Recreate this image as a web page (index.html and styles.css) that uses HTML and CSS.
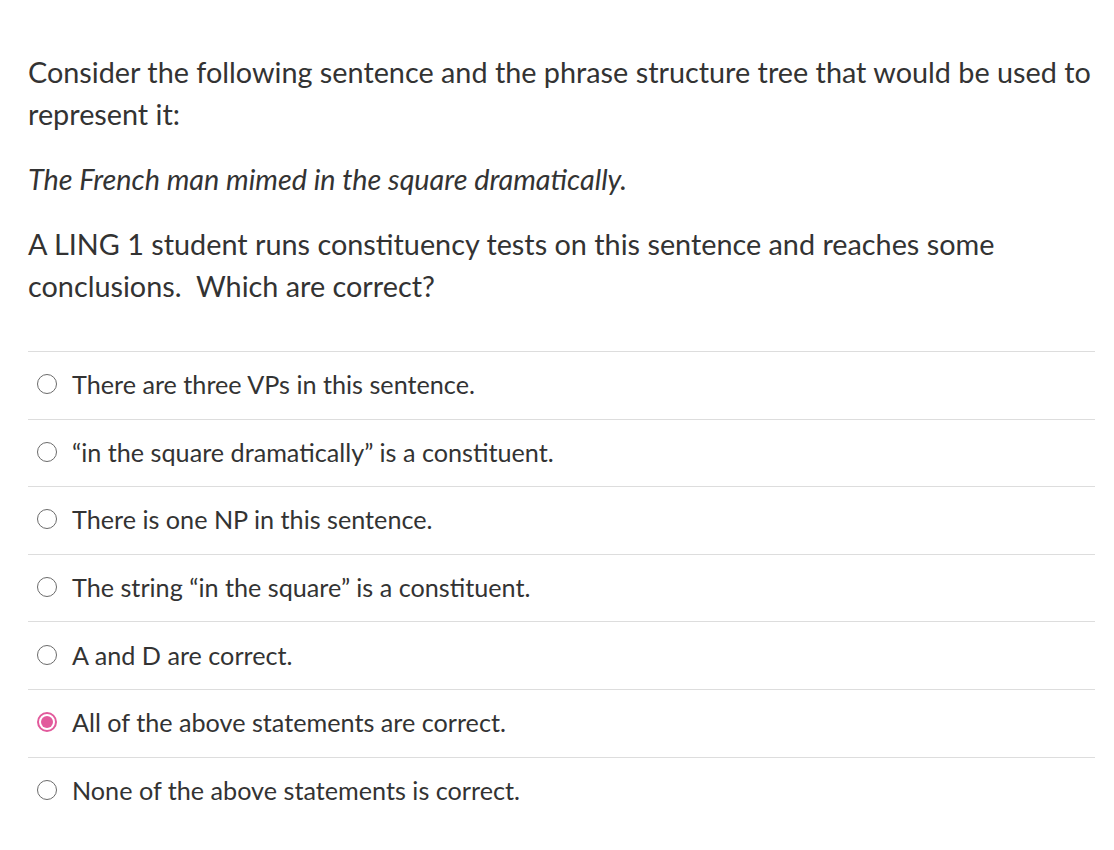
FILE: index.html
```html
<!DOCTYPE html>
<html>
<head>
<meta charset="utf-8">
<link rel="stylesheet" href="styles.css">
</head>
<body>
<div class="question">
  <div class="question-text">
    <p>Consider the following sentence and the phrase structure tree that would be used to represent it:</p>
    <p><em>The French man mimed in the square dramatically.</em></p>
    <p>A LING 1 student runs constituency tests on this sentence and reaches some conclusions.&nbsp; Which are correct?</p>
  </div>
  <div class="answers">
    <label class="answer"><span class="radio"></span><span class="answer-text">There are three VPs in this sentence.</span></label>
    <label class="answer"><span class="radio"></span><span class="answer-text">“in the square dramatically” is a constituent.</span></label>
    <label class="answer"><span class="radio"></span><span class="answer-text">There is one NP in this sentence.</span></label>
    <label class="answer"><span class="radio"></span><span class="answer-text">The string “in the square” is a constituent.</span></label>
    <label class="answer"><span class="radio"></span><span class="answer-text">A and D are correct.</span></label>
    <label class="answer"><span class="radio checked"></span><span class="answer-text">All of the above statements are correct.</span></label>
    <label class="answer"><span class="radio"></span><span class="answer-text">None of the above statements is correct.</span></label>
  </div>
</div>
</body>
</html>
```
FILE: styles.css
```css
html, body {
  margin: 0;
  padding: 0;
  background: #ffffff;
}
body {
  font-family: Lato, "Open Sans", sans-serif;
  color: #333333;
}
.question {
  padding: 51px 19px 0 28px;
}
.question-text p {
  margin: 0 0 23px 0;
  font-size: 28.8px;
  line-height: 42px;
  color: #333333;
}
.question-text em {
  font-style: italic;
}
.answers {
  margin-top: 44px;
}
.answer {
  display: flex;
  align-items: center;
  gap: 15px;
  height: 67.6px;
  box-sizing: border-box;
  border-top: 1px solid #dddddd;
  padding-left: 9px;
  padding-bottom: 2px;
}
.answer-text {
  font-size: 25.2px;
  color: #333333;
}
.radio {
  width: 20px;
  height: 20px;
  box-sizing: border-box;
  border: 1.5px solid #6b6b6b;
  border-radius: 50%;
  flex: none;
  position: relative;
}
.radio.checked {
  border: 2px solid #e25a9c;
}
.radio.checked::after {
  content: "";
  position: absolute;
  left: 2px;
  top: 2px;
  right: 2px;
  bottom: 2px;
  border-radius: 50%;
  background: #e25a9c;
}
```
